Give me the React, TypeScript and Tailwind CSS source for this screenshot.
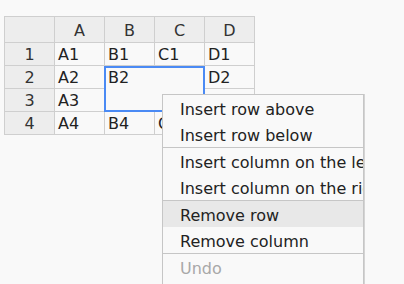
import React from 'react';

const COLS = ['A', 'B', 'C', 'D'];

const MenuItem: React.FC<{ label: string; active?: boolean; disabled?: boolean }> = ({ label, active, disabled }) => (
  <div
    className={`h-[26px] pt-[4px] pl-[17px] leading-[22px] whitespace-nowrap ${
      active ? 'bg-[#e8e8e8]' : ''
    } ${disabled ? 'text-[#a8a8a8]' : 'text-[#222]'}`}
  >
    {label}
  </div>
);

const Sep = () => <div className="h-px bg-[#c6c6c6]" />;

export default function App() {
  const cell = 'border-r border-b border-[#cfcfcf] h-full px-[3px] pt-[1px] leading-[21px] overflow-hidden whitespace-nowrap';
  const head = 'border-r border-b border-[#cfcfcf] bg-[#ededed] h-full text-center pt-[2px] leading-[23px] text-[#333]';

  return (
    <div className="relative w-[404px] h-[284px] overflow-hidden bg-[#f9f9f9] text-[16px] text-[#222]" style={{ fontFamily: '"DejaVu Sans", Verdana, sans-serif' }}>
      {/* Grid */}
      <div className="absolute left-[4px] top-[16px]">
        <div className="relative grid grid-cols-[repeat(5,50px)] grid-rows-[26px_repeat(4,23px)] border-l border-t border-[#cfcfcf]">
          <div className={head}></div>
          {COLS.map(c => (
            <div key={c} className={head}>{c}</div>
          ))}

          <div className={head.replace('pt-[2px] leading-[23px]', '') + ' pt-[1px] leading-[21px]'}>1</div>
          <div className={cell}>A1</div>
          <div className={cell}>B1</div>
          <div className={cell}>C1</div>
          <div className={cell}>D1</div>

          <div className={head.replace('pt-[2px] leading-[23px]', '') + ' pt-[1px] leading-[21px]'}>2</div>
          <div className={cell}>A2</div>
          <div className={`${cell} col-span-2 row-span-2`}>B2</div>
          <div className={cell}>D2</div>

          <div className={head.replace('pt-[2px] leading-[23px]', '') + ' pt-[1px] leading-[21px]'}>3</div>
          <div className={cell}>A3</div>
          <div className={cell}></div>

          <div className={head.replace('pt-[2px] leading-[23px]', '') + ' pt-[1px] leading-[21px]'}>4</div>
          <div className={cell}>A4</div>
          <div className={cell}>B4</div>
          <div className={cell}>C4</div>
          <div className={cell}>D4</div>

          {/* selection */}
          <div className="absolute left-[99px] top-[49px] w-[101px] h-[46px] border-2 border-[#4a8af4] pointer-events-none" />
        </div>
      </div>

      {/* Context menu */}
      <div className="absolute left-[162px] top-[94px] w-[202px] border border-[#c6c6c6] bg-[#f9f9f9] overflow-hidden shadow-[1px_0_0_#d4d4d4]">
        <MenuItem label="Insert row above" />
        <MenuItem label="Insert row below" />
        <Sep />
        <MenuItem label="Insert column on the left" />
        <MenuItem label="Insert column on the right" />
        <Sep />
        <MenuItem label="Remove row" active />
        <MenuItem label="Remove column" />
        <Sep />
        <MenuItem label="Undo" disabled />
        <MenuItem label="Redo" disabled />
      </div>
    </div>
  );
}
